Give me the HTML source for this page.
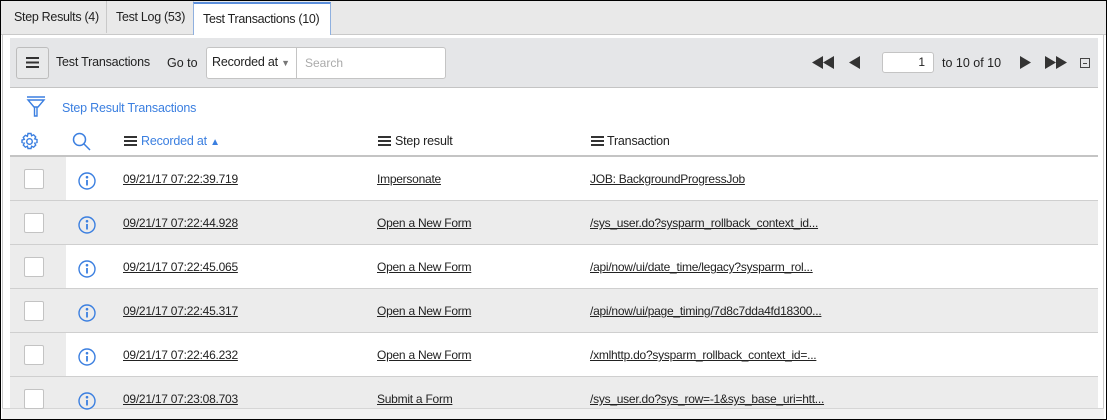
<!DOCTYPE html>
<html><head><meta charset="utf-8"><style>
*{box-sizing:border-box;margin:0;padding:0}
body{width:1107px;height:420px;overflow:hidden;background:#fff;font-family:"Liberation Sans",sans-serif;font-size:12px;color:#222;position:relative}
.a{position:absolute;white-space:nowrap}
.frame{left:0;top:0;width:1107px;height:420px;border:1px solid #000}
.tabs{left:1px;top:1px;width:1105px;height:34px;background:#e9e9e9;border-bottom:1px solid #c9c9c9}
.tab{top:0;height:33px;line-height:34px;padding:0 0 0 10px;border-right:1px solid #c9c9c9;font-size:12.5px;letter-spacing:-0.3px;overflow:hidden}
.tbar{left:10px;top:38px;width:1088px;height:50px;background:#e5e6e8;border-bottom:1px solid #c4c4c4}
.row{left:10px;width:1088px;height:44px;border-bottom:1px solid #cfcfcf}
.cb{left:10px;width:56px;height:43px;background:#ececec}
.box{left:24px;width:20px;height:20px;background:#fff;border:1px solid #c3c3c3;border-radius:2px}
.t{letter-spacing:-0.25px;text-decoration:underline;color:#222}
.blue{color:#3b7fe0}
</style></head><body>
<div class="a tabs"></div>
<div class="a tab" style="left:1px;width:106px;padding-left:13px">Step Results (4)</div>
<div class="a tab" style="left:107px;width:87px;padding-left:9px">Test Log (53)</div>
<div class="a tab" style="left:193px;top:2px;height:33px;width:138px;background:#fff;border:1px solid #8fb0df;border-top:2px solid #5c8fdc;border-bottom:none;line-height:31px;padding-left:9px">Test Transactions (10)</div>
<div class="a" style="left:2px;top:35px;width:1102px;height:374px;border-left:1px solid #c9c9c9;border-right:1px solid #c9c9c9"></div>
<div class="a" style="left:2px;top:408px;width:1102px;height:11px;background:#f2f2f2;border-top:1px solid #d6d6d6"></div>

<div class="a tbar"></div>
<div class="a" style="left:16px;top:47px;width:33px;height:32px;border:1px solid #bdbdbd;border-radius:3px;background:#e8e9ea"></div>
<svg class="a" style="left:26px;top:57px" width="13" height="11"><rect y="0" width="13" height="2" fill="#333"/><rect y="4.5" width="13" height="2" fill="#333"/><rect y="9" width="13" height="2" fill="#333"/></svg>
<div class="a" style="left:56px;top:55px;font-size:12.5px;letter-spacing:-0.2px">Test Transactions</div>
<div class="a" style="left:167px;top:56px;font-size:12.5px">Go to</div>
<div class="a" style="left:206px;top:47px;width:240px;height:32px;background:#fff;border:1px solid #c4c4c4;border-radius:3px"></div>
<div class="a" style="left:296px;top:48px;width:1px;height:30px;background:#c4c4c4"></div>
<div class="a" style="left:212px;top:55px;font-size:12.5px;letter-spacing:-0.2px">Recorded at <span style="font-size:9px;color:#777">▼</span></div>
<div class="a" style="left:305px;top:56px;color:#aaa;font-size:12px">Search</div>
<svg class="a" style="left:812px;top:56px" width="26" height="13" fill="#333"><path d="M0 6.5L11 0v13zM11 6.5L22 0v13z"/></svg>
<svg class="a" style="left:849px;top:56px" width="12" height="13" fill="#333"><path d="M0 6.5L11 0v13z"/></svg>
<div class="a" style="left:882px;top:52px;width:52px;height:21px;background:#fff;border:1px solid #c4c4c4;border-radius:3px;text-align:right;padding-right:8px;line-height:19px">1</div>
<div class="a" style="left:942px;top:56px;font-size:12.5px">to 10 of 10</div>
<svg class="a" style="left:1020px;top:56px" width="12" height="13" fill="#333"><path d="M11 6.5L0 0v13z"/></svg>
<svg class="a" style="left:1045px;top:56px" width="24" height="13" fill="#333"><path d="M11 6.5L0 0v13zM22 6.5L11 0v13z"/></svg>
<div class="a" style="left:1080px;top:58px;width:10px;height:10px;border:1px solid #444"><div class="a" style="left:2px;top:3.5px;width:4px;height:1px;background:#444"></div></div>

<svg class="a" style="left:26px;top:96px" width="20" height="22" fill="none" stroke="#3b7fe0" stroke-width="1.4"><path d="M1 1h18M2 4h16L12 11v0H8L2 4z"/><path d="M8.5 11v9h2.5v-9"/></svg>
<div class="a blue" style="left:62px;top:101px;font-size:12.5px;letter-spacing:-0.2px">Step Result Transactions</div>

<svg class="a" style="left:20px;top:132px" width="19" height="19" fill="none" stroke="#3b7fe0" stroke-width="1.4"><circle cx="9.5" cy="9.5" r="2.8"/><path d="M8 1.5h3l.6 2.3 2-1 2.1 2.1-1 2 2.3.6v3l-2.3.6 1 2-2.1 2.1-2-1-.6 2.3H8l-.6-2.3-2 1-2.1-2.1 1-2-2.3-.6V8l2.3-.6-1-2 2.1-2.1 2 1z"/></svg>
<svg class="a" style="left:72px;top:132px" width="20" height="20" fill="none" stroke="#3b7fe0" stroke-width="1.5"><circle cx="7.5" cy="7.5" r="6"/><path d="M12 12l6 6"/></svg>
<svg class="a" style="left:124px;top:136px" width="13" height="10"><rect width="13" height="2" fill="#333"/><rect y="4" width="13" height="2" fill="#333"/><rect y="8" width="13" height="2" fill="#333"/></svg>
<div class="a blue" style="left:141px;top:134px;font-size:12.5px;letter-spacing:-0.2px">Recorded at <span style="font-size:10px">▲</span></div>
<svg class="a" style="left:378px;top:136px" width="13" height="10"><rect width="13" height="2" fill="#333"/><rect y="4" width="13" height="2" fill="#333"/><rect y="8" width="13" height="2" fill="#333"/></svg>
<div class="a" style="left:395px;top:134px;font-size:12.5px;letter-spacing:-0.2px">Step result</div>
<svg class="a" style="left:591px;top:136px" width="13" height="10"><rect width="13" height="2" fill="#333"/><rect y="4" width="13" height="2" fill="#333"/><rect y="8" width="13" height="2" fill="#333"/></svg>
<div class="a" style="left:607px;top:134px;font-size:12.5px;letter-spacing:-0.2px">Transaction</div>
<div class="a" style="left:10px;top:155px;width:1088px;height:2px;background:#c4c4c4"></div>

<div class="a row" style="top:157px;background:#fff"></div>
<div class="a row" style="top:201px;background:#ececec"></div>
<div class="a row" style="top:245px;background:#fff"></div>
<div class="a row" style="top:289px;background:#ececec"></div>
<div class="a row" style="top:333px;background:#fff"></div>
<div class="a row" style="top:377px;height:31px;background:#ececec;border:none"></div>
<div class="a cb" style="top:157px"></div><div class="a cb" style="top:245px"></div><div class="a cb" style="top:333px"></div>

<div class="a box" style="top:169px"></div><div class="a box" style="top:213px"></div><div class="a box" style="top:257px"></div><div class="a box" style="top:301px"></div><div class="a box" style="top:345px"></div><div class="a box" style="top:389px"></div>

<svg width="0" height="0" style="position:absolute"><defs><g id="i" fill="none" stroke="#3b7fe0" stroke-width="1.4"><circle cx="9" cy="9" r="8"/><path d="M9 8v5.5" stroke-width="1.8"/><circle cx="9" cy="5.2" r=".6" fill="#3b7fe0"/></g></defs></svg>
<svg class="a" style="left:78px;top:172px" width="18" height="18"><use href="#i"/></svg>
<svg class="a" style="left:78px;top:216px" width="18" height="18"><use href="#i"/></svg>
<svg class="a" style="left:78px;top:260px" width="18" height="18"><use href="#i"/></svg>
<svg class="a" style="left:78px;top:304px" width="18" height="18"><use href="#i"/></svg>
<svg class="a" style="left:78px;top:348px" width="18" height="18"><use href="#i"/></svg>
<svg class="a" style="left:78px;top:392px" width="18" height="18"><use href="#i"/></svg>

<div class="a t" style="left:123px;top:172px">09/21/17 07:22:39.719</div>
<div class="a t" style="left:377px;top:172px">Impersonate</div>
<div class="a t" style="left:590px;top:172px">JOB: BackgroundProgressJob</div>
<div class="a t" style="left:123px;top:216px">09/21/17 07:22:44.928</div>
<div class="a t" style="left:377px;top:216px">Open a New Form</div>
<div class="a t" style="left:590px;top:216px">/sys_user.do?sysparm_rollback_context_id...</div>
<div class="a t" style="left:123px;top:260px">09/21/17 07:22:45.065</div>
<div class="a t" style="left:377px;top:260px">Open a New Form</div>
<div class="a t" style="left:590px;top:260px">/api/now/ui/date_time/legacy?sysparm_rol...</div>
<div class="a t" style="left:123px;top:304px">09/21/17 07:22:45.317</div>
<div class="a t" style="left:377px;top:304px">Open a New Form</div>
<div class="a t" style="left:590px;top:304px">/api/now/ui/page_timing/7d8c7dda4fd18300...</div>
<div class="a t" style="left:123px;top:348px">09/21/17 07:22:46.232</div>
<div class="a t" style="left:377px;top:348px">Open a New Form</div>
<div class="a t" style="left:590px;top:348px">/xmlhttp.do?sysparm_rollback_context_id=...</div>
<div class="a t" style="left:123px;top:392px">09/21/17 07:23:08.703</div>
<div class="a t" style="left:377px;top:392px">Submit a Form</div>
<div class="a t" style="left:590px;top:392px">/sys_user.do?sys_row=-1&amp;sys_base_uri=htt...</div>

<div class="a frame"></div>
</body></html>
